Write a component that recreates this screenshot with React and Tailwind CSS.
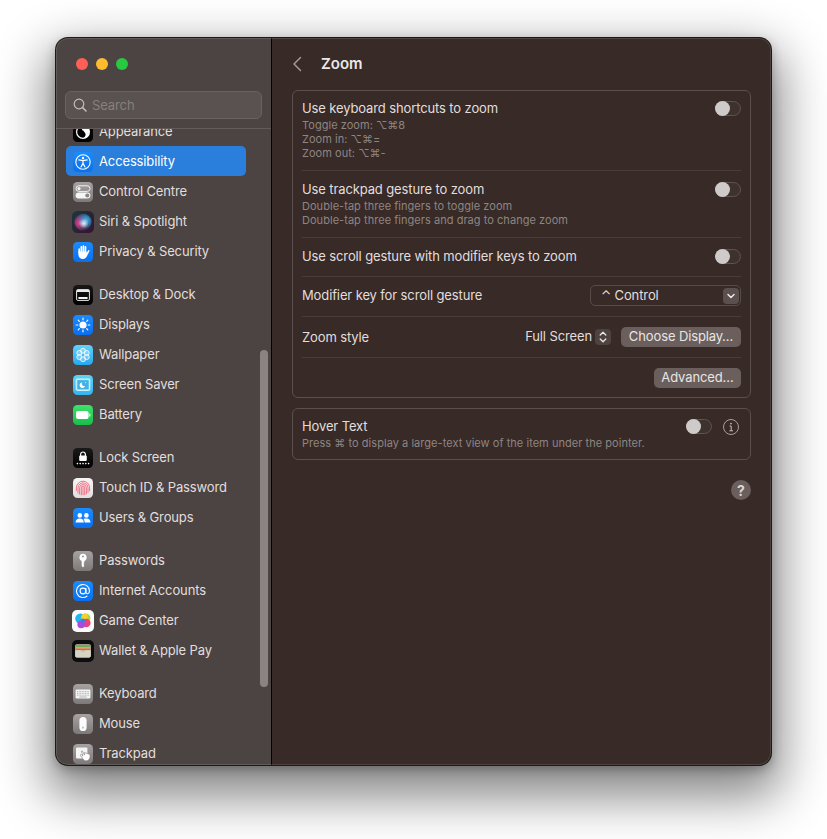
import React from "react";

const FONT = "font-['Inter','DejaVu_Sans',sans-serif]";

function Tile({ id, from, to, children, vb = "0 0 20 20" }) {
  return (
    <svg width="20" height="20" viewBox={vb} className="shrink-0">
      <defs>
        <linearGradient id={id} x1="0" y1="0" x2="0" y2="1">
          <stop offset="0" stopColor={from} />
          <stop offset="1" stopColor={to} />
        </linearGradient>
      </defs>
      <rect x="0" y="0" width="20" height="20" rx="4.5" fill={`url(#${id})`} />
      {children}
    </svg>
  );
}

const icons = {
  appearance: (
    <Tile id="ap" from="#0b0b0b" to="#000000">
      <circle cx="10" cy="10" r="7" fill="#fff" />
      <path d="M10 4.2a5.8 5.8 0 0 0 0 11.6c1.8-.8 2.6-2 2.6-3.4 0-2.2-2.6-2.6-2.6-4.8 0-1.4 1-2.4 0-3.4z" fill="#000" />
      <circle cx="10" cy="7.4" r="1" fill="#fff" />
    </Tile>
  ),
  accessibility: (
    <Tile id="ac" from="#1a8cff" to="#0a6fee">
      <circle cx="10" cy="10" r="7.2" fill="none" stroke="#fff" strokeWidth="1.1" />
      <circle cx="10" cy="6" r="1.2" fill="#fff" />
      <path d="M5.8 7.9 L10 8.7 L14.2 7.9 M10 8.7 V11.4 M10 11.4 L8 15 M10 11.4 L12 15" stroke="#fff" strokeWidth="1.2" strokeLinecap="round" fill="none" />
    </Tile>
  ),
  control: (
    <Tile id="cc" from="#a6a2a2" to="#7d7979">
      <rect x="3" y="3.8" width="14" height="5.6" rx="2.8" fill="none" stroke="#f2f2f2" strokeWidth="1" />
      <circle cx="6" cy="6.6" r="1.6" fill="#f2f2f2" />
      <rect x="2.6" y="10.6" width="14.8" height="6" rx="3" fill="#f5f5f5" />
      <circle cx="14.3" cy="13.6" r="2" fill="#8a8686" />
    </Tile>
  ),
  siri: (
    <svg width="22" height="22" viewBox="0 0 22 22" className="-m-px shrink-0">
      <defs>
        <radialGradient id="sp" cx="0.3" cy="0.55" r="0.6">
          <stop offset="0" stopColor="#f0408a" />
          <stop offset="1" stopColor="#f0408a" stopOpacity="0" />
        </radialGradient>
        <radialGradient id="sb" cx="0.68" cy="0.4" r="0.55">
          <stop offset="0" stopColor="#3fb4f5" />
          <stop offset="1" stopColor="#3fb4f5" stopOpacity="0" />
        </radialGradient>
        <radialGradient id="sc" cx="0.55" cy="0.58" r="0.28">
          <stop offset="0" stopColor="#e8eef5" />
          <stop offset="1" stopColor="#e8eef5" stopOpacity="0" />
        </radialGradient>
        <linearGradient id="sbg" x1="0" y1="0" x2="1" y2="1">
          <stop offset="0" stopColor="#153a3f" />
          <stop offset="1" stopColor="#3a1030" />
        </linearGradient>
      </defs>
      <rect width="22" height="22" rx="5.5" fill="url(#sbg)" />
      <circle cx="11" cy="11" r="8.6" fill="#1a2a38" />
      <circle cx="11" cy="11" r="8.6" fill="url(#sp)" />
      <circle cx="11" cy="11" r="8.6" fill="url(#sb)" />
      <circle cx="11" cy="11" r="8.6" fill="url(#sc)" />
    </svg>
  ),
  privacy: (
    <Tile id="pr" from="#1a8cff" to="#0a6fee">
      <path d="M6.2 7.2 V10.5 M8.3 4.8 V10 M10.4 4 V10 M12.5 4.9 V10.2" stroke="#fff" strokeWidth="1.7" strokeLinecap="round" />
      <path d="M5.4 9.4 L7 9.4 H13.4 L13.4 10.8 L15.2 8.4 C15.9 7.7 16.9 8.4 16.4 9.3 L14 14 C13.2 16 11.6 17 10 17 C7.2 17 5.4 15 5.4 12.4 Z" fill="#fff" />
    </Tile>
  ),
  desktop: (
    <Tile id="de" from="#181818" to="#000000">
      <rect x="3.6" y="4.6" width="12.8" height="10.8" rx="1.2" fill="none" stroke="#e9e9e9" strokeWidth="1" />
      <rect x="4" y="5" width="12" height="2" fill="#e9e9e9" />
      <rect x="5.4" y="12" width="9.2" height="2" rx="0.4" fill="#f5f5f5" />
    </Tile>
  ),
  displays: (
    <Tile id="di" from="#1a8cff" to="#0a6fee">
      <circle cx="10" cy="10" r="3.6" fill="#fff" />
      <path d="M10 3.2V4.8M10 15.2V16.8M3.2 10H4.8M15.2 10H16.8M5.2 5.2L6.3 6.3M13.7 13.7L14.8 14.8M5.2 14.8L6.3 13.7M13.7 6.3L14.8 5.2" stroke="#fff" strokeWidth="1.2" strokeLinecap="round" />
    </Tile>
  ),
  wallpaper: (
    <Tile id="wa" from="#62d2fa" to="#28a8ee">
      <g fill="#ffffff" fillOpacity="0.25" stroke="#fff" strokeWidth="0.8">
        <circle cx="10" cy="5.8" r="2.5" />
        <circle cx="10" cy="14.2" r="2.5" />
        <circle cx="6.3" cy="7.9" r="2.5" />
        <circle cx="13.7" cy="7.9" r="2.5" />
        <circle cx="6.3" cy="12.1" r="2.5" />
        <circle cx="13.7" cy="12.1" r="2.5" />
      </g>
    </Tile>
  ),
  saver: (
    <Tile id="sa" from="#5fd3f8" to="#34b4ee">
      <rect x="3.2" y="4" width="13.6" height="11.4" rx="1" fill="#8fe2fb" stroke="#e9fbff" strokeWidth="0.9" />
      <rect x="4.4" y="5.2" width="11.2" height="9" fill="#2ba3dc" fillOpacity="0.75" />
      <path d="M9 7.4a2.8 2.8 0 1 0 3 3.6 2.6 2.6 0 0 1-3-3.6z" fill="#fff" />
      <circle cx="12.6" cy="7.6" r="0.5" fill="#fff" />
    </Tile>
  ),
  battery: (
    <Tile id="ba" from="#3fe06a" to="#18bf4a">
      <rect x="3" y="6" width="12.6" height="8" rx="2" fill="#fff" />
      <rect x="16.2" y="8.4" width="1.2" height="3.2" rx="0.6" fill="#e5fbe9" />
    </Tile>
  ),
  lock: (
    <Tile id="lo" from="#1a1a1a" to="#000000">
      <path d="M7.6 8V6.4a2.4 2.4 0 0 1 4.8 0V8" fill="none" stroke="#fff" strokeWidth="1.2" />
      <rect x="6.2" y="7.6" width="7.6" height="5.4" rx="1" fill="#fff" />
      <g fill="#fff">
        <circle cx="4.4" cy="15.6" r="0.8" />
        <circle cx="7.2" cy="15.6" r="0.8" />
        <circle cx="10" cy="15.6" r="0.8" />
        <circle cx="12.8" cy="15.6" r="0.8" />
        <circle cx="15.6" cy="15.6" r="0.8" />
      </g>
    </Tile>
  ),
  touch: (
    <Tile id="to" from="#f8f5f5" to="#e2dede">
      <g fill="none" stroke="#f0566e" strokeWidth="0.8" strokeLinecap="round">
        <path d="M3.4 12.6V9.8a6.6 6.6 0 0 1 13.2 0v3" />
        <path d="M5 15V9.9a5 5 0 0 1 10 0v4.8" />
        <path d="M6.6 16.2V9.9a3.4 3.4 0 0 1 6.8 0v6" />
        <path d="M8.3 16.8V9.9a1.7 1.7 0 0 1 3.4 0v6.8" />
        <path d="M10 16.8V9.6" />
      </g>
    </Tile>
  ),
  users: (
    <Tile id="us" from="#1a8cff" to="#0a6fee">
      <g fill="#fff">
        <circle cx="6.8" cy="7.4" r="2.3" />
        <circle cx="13.4" cy="7.4" r="2.3" />
        <path d="M2.6 14.4c0-2.6 1.8-3.9 4.2-3.9s4 1.3 4 3.9z" />
        <path d="M11.6 14.4c0-1.5-.4-2.7-1.2-3.4.8-.4 1.9-.5 3-.5 2.4 0 4.1 1.3 4.1 3.9z" />
      </g>
    </Tile>
  ),
  passwords: (
    <Tile id="pa" from="#a6a2a2" to="#7d7979">
      <path d="M10 2.8a3.7 3.7 0 0 1 1.4 7.1V11l-.9.9.9.9-.9.9.9.9-1.4 1.8-1.3-1.4V9.9A3.7 3.7 0 0 1 10 2.8z" fill="#fff" />
      <circle cx="10" cy="5.4" r="0.95" fill="#8f8b8b" />
    </Tile>
  ),
  internet: (
    <Tile id="in" from="#1a8cff" to="#0a6fee">
      <circle cx="10" cy="10" r="2.9" fill="none" stroke="#fff" strokeWidth="1.1" />
      <path d="M12.9 7.2v3.9c0 2.4 3.6 2.2 3.6-1.1a6.5 6.5 0 1 0-2.6 5.2" fill="none" stroke="#fff" strokeWidth="1.1" strokeLinecap="round" />
    </Tile>
  ),
  game: (
    <svg width="22" height="22" viewBox="0 0 22 22" className="-m-px shrink-0">
      <rect width="22" height="22" rx="5" fill="#fbfbfb" />
      <circle cx="8.4" cy="8.6" r="5.2" fill="#1fb6ef" />
      <circle cx="13.6" cy="8.2" r="4.8" fill="#a8d93a" />
      <circle cx="12.8" cy="6.4" r="3" fill="#f7d02c" />
      <circle cx="14.4" cy="13" r="4.2" fill="#f2417a" />
      <circle cx="9.2" cy="14.4" r="3.8" fill="#a94be0" />
      <circle cx="10.8" cy="10.6" r="2.2" fill="#3f7fe0" />
    </svg>
  ),
  wallet: (
    <svg width="22" height="22" viewBox="0 0 22 22" className="-m-px shrink-0">
      <rect width="22" height="22" rx="5" fill="#0d0d0d" />
      <rect x="3.2" y="4.2" width="15.6" height="13.2" rx="1.6" fill="#c8c4b4" />
      <rect x="3.8" y="5.2" width="14.4" height="1.7" fill="#5aa64e" />
      <rect x="3.8" y="6.9" width="14.4" height="1.7" fill="#e8a93a" />
      <rect x="3.8" y="8.6" width="14.4" height="1.6" fill="#e0634a" />
      <path d="M3.2 10.2h5.4c.4 1.4 1.2 2 2.4 2s2-.6 2.4-2h5.4v5.6a1.6 1.6 0 0 1-1.6 1.6H4.8a1.6 1.6 0 0 1-1.6-1.6z" fill="#d6d2c4" />
    </svg>
  ),
  keyboard: (
    <Tile id="ke" from="#a6a2a2" to="#7d7979">
      <rect x="2.6" y="5.6" width="14.8" height="8.8" rx="1.2" fill="#f4f4f4" />
      <path d="M4 7.6H16M4 9.4H16M4 11.2H16" stroke="#a5a1a1" strokeWidth="0.8" strokeDasharray="1 0.6" />
      <path d="M6.4 13H13.6" stroke="#a5a1a1" strokeWidth="0.8" />
    </Tile>
  ),
  mouse: (
    <Tile id="mo" from="#a6a2a2" to="#7d7979">
      <rect x="6.4" y="3" width="7.2" height="14" rx="3.6" fill="#fbfbfb" />
      <rect x="9.5" y="12.4" width="1" height="2" rx="0.5" fill="#8f8b8b" />
    </Tile>
  ),
  trackpad: (
    <Tile id="tr" from="#a6a2a2" to="#7d7979">
      <rect x="3" y="3.4" width="11.4" height="11" rx="1" fill="#f4f4f4" />
      <path d="M8.4 7.2l.9-.3 2.2 4.2V8.6l3.8 1.2c1.2.4 1.8 1.2 1.8 2.4 0 2.6-1.6 4.6-3.8 4.6-1.8 0-2.8-.8-3.6-2.4L7.4 11.4c-.3-.6.5-1.2 1-.7l1.6 1.5z" fill="#fff" stroke="#7d7979" strokeWidth="0.6" />
    </Tile>
  ),
};

const groups = [
  [
    ["appearance", "Appearance"],
    ["accessibility", "Accessibility", true],
    ["control", "Control Centre"],
    ["siri", "Siri & Spotlight"],
    ["privacy", "Privacy & Security"],
  ],
  [
    ["desktop", "Desktop & Dock"],
    ["displays", "Displays"],
    ["wallpaper", "Wallpaper"],
    ["saver", "Screen Saver"],
    ["battery", "Battery"],
  ],
  [
    ["lock", "Lock Screen"],
    ["touch", "Touch ID & Password"],
    ["users", "Users & Groups"],
  ],
  [
    ["passwords", "Passwords"],
    ["internet", "Internet Accounts"],
    ["game", "Game Center"],
    ["wallet", "Wallet & Apple Pay"],
  ],
  [
    ["keyboard", "Keyboard"],
    ["mouse", "Mouse"],
    ["trackpad", "Trackpad"],
  ],
];

function SideRow({ icon, label, active }) {
  return (
    <div
      className={
        "flex h-[30px] w-[180px] items-center gap-[6px] rounded-[5px] pl-[7px] pt-[2px] text-[13px] tracking-[-0.13px] " +
        (active ? "bg-[#2a7fdc] text-white" : "text-[#e2dedd]")
      }
    >
      {icons[icon]}
      <span>{label}</span>
    </div>
  );
}

function Toggle() {
  return (
    <div className="relative h-[15px] w-[26px] shrink-0 rounded-full border border-[#5f5452] bg-[#43383599]">
      <div className="absolute -left-px -top-px h-[15px] w-[15px] rounded-full bg-[#cfcbca]" />
    </div>
  );
}

function Sep() {
  return <div className="h-px bg-[#483d3a]" />;
}

function Title({ children }) {
  return <div className="text-[13px] leading-[16px] tracking-[-0.12px] text-[#e2dedd]">{children}</div>;
}

function Sub({ children }) {
  return <div className="text-[11px] leading-[14px] tracking-[0.04px] text-[#8e8583]">{children}</div>;
}

function Button({ children, width }) {
  return (
    <div className={"flex h-[20px] items-center justify-center rounded-[5px] bg-[#6a5f5c] text-[13px] tracking-[-0.12px] text-[#e9e5e4] " + width}>
      {children}
    </div>
  );
}

export default function App() {
  return (
    <div className={"h-[839px] w-full overflow-hidden bg-white pl-[56px] pt-[38px] " + FONT}>
      <div className="relative flex h-[727px] w-[715px] overflow-hidden rounded-[12px] bg-[#372a27] shadow-[0_0_0_1px_#1c1a19,0_22px_50px_10px_rgba(0,0,0,0.48),0_4px_12px_rgba(0,0,0,0.3)]">
        {/* Sidebar */}
        <div className="relative flex h-full w-[216px] shrink-0 flex-col border-r border-black bg-[#4b4442]">
          <div className="flex h-[90px] shrink-0 flex-col px-[9px] pt-[20px]">
            <div className="flex gap-[8px] pl-[11px]">
              <div className="h-[12px] w-[12px] rounded-full bg-[#ff5f57]" />
              <div className="h-[12px] w-[12px] rounded-full bg-[#febc2e]" />
              <div className="h-[12px] w-[12px] rounded-full bg-[#28c840]" />
            </div>
            <div className="mt-[21px] flex h-[28px] w-[197px] items-center gap-[4px] rounded-[6px] border border-[#6a6260] bg-[#5a5250] pl-[6px] text-[13px] tracking-[-0.1px] text-[#877f7d]">
              <svg width="16" height="16" viewBox="0 0 16 16" fill="none" stroke="#c3bebd" strokeWidth="1.2" strokeLinecap="round">
                <circle cx="7" cy="7" r="4.8" />
                <path d="M10.6 10.6 L14 14" strokeWidth="1.5" />
              </svg>
              <span className="pt-[2px]">Search</span>
            </div>
          </div>
          <div className="min-h-0 flex-1 overflow-hidden border-t border-[#635b59]">
            <div className="-mt-[13px] flex flex-col gap-[13px] pl-[10px]">
              {groups.map((g, i) => (
                <div key={i} className="flex flex-col">
                  {g.map(([icon, label, active]) => (
                    <SideRow key={label} icon={icon} label={label} active={active} />
                  ))}
                </div>
              ))}
            </div>
          </div>
          <div className="absolute left-[204px] top-[312px] h-[337px] w-[8px] rounded-full bg-[#8b8382]" />
        </div>

        {/* Main */}
        <div className="flex min-w-0 flex-1 flex-col px-[20px] text-[#e2dedd]">
          <div className="flex h-[52px] shrink-0 items-center">
            <svg width="10" height="16" viewBox="0 0 10 16" fill="none" stroke="#a09896" strokeWidth="1.5" strokeLinecap="round" strokeLinejoin="round">
              <path d="M8.5 1.5 L2 8 L8.5 14.5" />
            </svg>
            <div className="ml-[19px] text-[15px] font-semibold text-[#ebe7e6]">Zoom</div>
          </div>

          <div className="rounded-[6px] border border-[#5b504d] px-[9px]">
            <div className="flex h-[79px] justify-between pt-[9px]">
              <div>
                <Title>Use keyboard shortcuts to zoom</Title>
                <div className="mt-[2px]">
                  <Sub>Toggle zoom: ⌥⌘8</Sub>
                  <Sub>Zoom in: ⌥⌘=</Sub>
                  <Sub>Zoom out: ⌥⌘-</Sub>
                </div>
              </div>
              <div className="pt-[1px]"><Toggle /></div>
            </div>
            <Sep />
            <div className="flex h-[66px] justify-between pt-[10px]">
              <div>
                <Title>Use trackpad gesture to zoom</Title>
                <div className="mt-[2px]">
                  <Sub>Double-tap three fingers to toggle zoom</Sub>
                  <Sub>Double-tap three fingers and drag to change zoom</Sub>
                </div>
              </div>
              <div className="pt-[1px]"><Toggle /></div>
            </div>
            <Sep />
            <div className="flex h-[38px] items-center justify-between pb-[2px]">
              <Title>Use scroll gesture with modifier keys to zoom</Title>
              <Toggle />
            </div>
            <Sep />
            <div className="flex h-[39px] items-center justify-between pb-[2px]">
              <div className="mb-[2px]"><Title>Modifier key for scroll gesture</Title></div>
              <div className="flex h-[21px] w-[151px] items-center justify-between rounded-[5px] border border-[#574c49] pl-[10px] pr-[1px] text-[13px] tracking-[-0.12px]">
                <span>⌃ Control</span>
                <div className="flex h-[16px] w-[16px] items-center justify-center rounded-[4px] bg-[#5b504d]">
                  <svg width="10" height="10" viewBox="0 0 10 10" fill="none" stroke="#ece8e7" strokeWidth="1.5" strokeLinecap="round" strokeLinejoin="round">
                    <path d="M2 3.5 L5 6.5 L8 3.5" />
                  </svg>
                </div>
              </div>
            </div>
            <Sep />
            <div className="flex h-[40px] items-center justify-between">
              <Title>Zoom style</Title>
              <div className="flex items-center">
                <span className="text-[13px] tracking-[-0.12px]">Full Screen</span>
                <div className="ml-[3px] flex h-[16px] w-[16px] items-center justify-center rounded-[4px] bg-[#4d4340]">
                  <svg width="10" height="14" viewBox="0 0 10 14" fill="none" stroke="#ece8e7" strokeWidth="1.3" strokeLinecap="round" strokeLinejoin="round">
                    <path d="M2.2 5 L5 2.2 L7.8 5 M2.2 9 L5 11.8 L7.8 9" />
                  </svg>
                </div>
                <div className="ml-[10px]"><Button width="w-[120px]">Choose Display…</Button></div>
              </div>
            </div>
            <Sep />
            <div className="flex h-[39px] items-center justify-end">
              <Button width="w-[87px]">Advanced…</Button>
            </div>
          </div>

          <div className="mt-[10px] flex h-[52px] justify-between rounded-[6px] border border-[#5b504d] pl-[9px] pr-[10px] pt-[9px]">
            <div>
              <Title>Hover Text</Title>
              <div className="mt-[2px]">
                <Sub>Press ⌘ to display a large-text view of the item under the pointer.</Sub>
              </div>
            </div>
            <div className="flex h-[17px] items-center gap-[10px]">
              <Toggle />
              <svg width="18" height="18" viewBox="0 0 18 18" fill="none">
                <circle cx="9" cy="9" r="7.5" stroke="#a8a09e" strokeWidth="1" />
                <circle cx="9" cy="5.6" r="0.85" fill="#c8c2c0" />
                <path d="M7.6 8H9.2V12.6M7.4 12.8H11" stroke="#c8c2c0" strokeWidth="1" />
              </svg>
            </div>
          </div>

          <div className="mt-[20px] flex justify-end">
            <div className="flex h-[20px] w-[20px] items-center justify-center rounded-full bg-[#6a5f5c] text-[14px] font-bold text-[#dcd7d6]">?</div>
          </div>
        </div>
        <div className="pointer-events-none absolute inset-0 rounded-[12px] shadow-[inset_0_0_0_1px_rgba(255,255,255,0.12)]" />
      </div>
    </div>
  );
}
